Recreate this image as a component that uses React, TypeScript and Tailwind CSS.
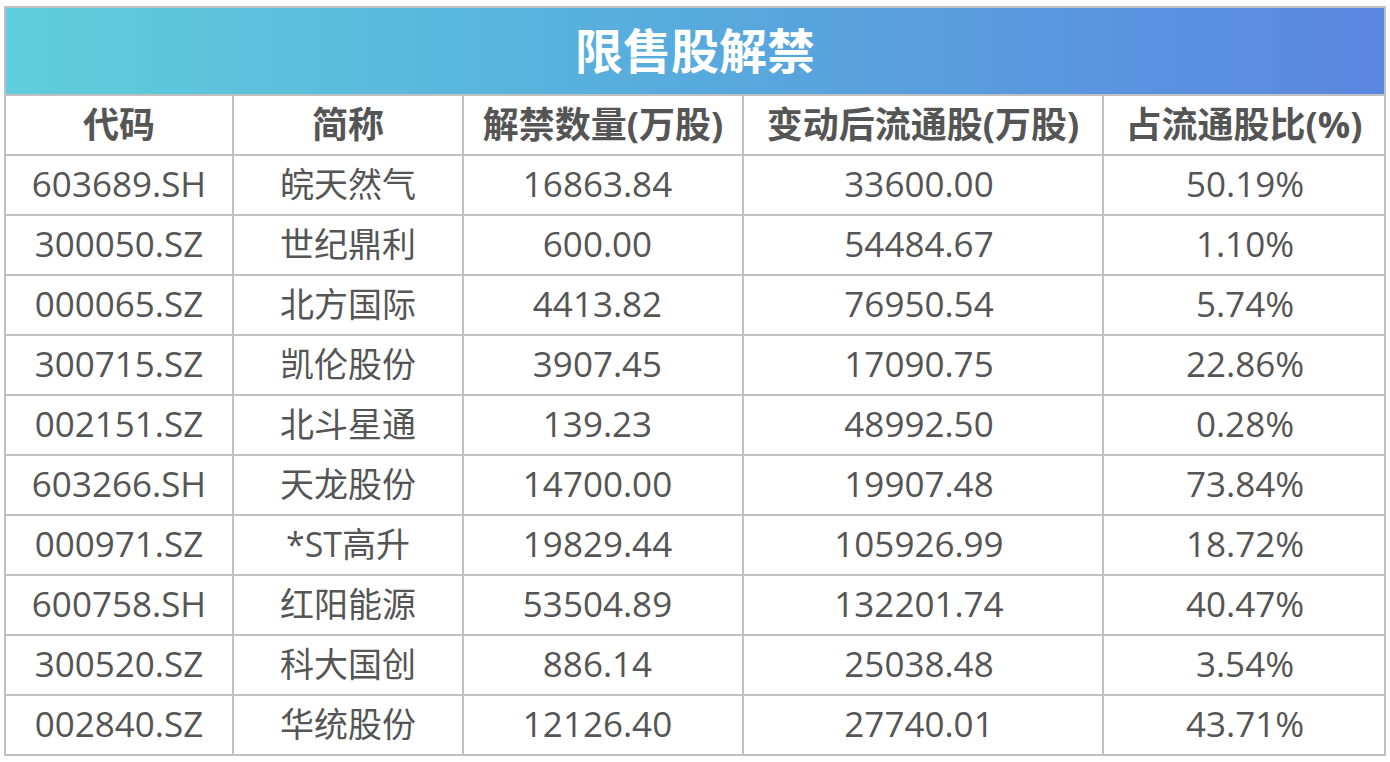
import React from 'react';

const rows = [
  ['603689.SH', '皖天然气', '16863.84', '33600.00', '50.19%'],
  ['300050.SZ', '世纪鼎利', '600.00', '54484.67', '1.10%'],
  ['000065.SZ', '北方国际', '4413.82', '76950.54', '5.74%'],
  ['300715.SZ', '凯伦股份', '3907.45', '17090.75', '22.86%'],
  ['002151.SZ', '北斗星通', '139.23', '48992.50', '0.28%'],
  ['603266.SH', '天龙股份', '14700.00', '19907.48', '73.84%'],
  ['000971.SZ', '*ST高升', '19829.44', '105926.99', '18.72%'],
  ['600758.SH', '红阳能源', '53504.89', '132201.74', '40.47%'],
  ['300520.SZ', '科大国创', '886.14', '25038.48', '3.54%'],
  ['002840.SZ', '华统股份', '12126.40', '27740.01', '43.71%'],
];

const headers = ['代码', '简称', '解禁数量(万股)', '变动后流通股(万股)', '占流通股比(%)'];

// per-column size / offset tweaks
const colCls = [
  'text-[35px]',
  'text-[34px]',
  'text-[35px] pr-[11px]',
  'text-[35px] pr-[8px]',
  'text-[35px] pl-[2px]',
];

const font = { fontFamily: '"Open Sans", "Noto Sans CJK SC", sans-serif' };

export default function App() {
  return (
    <div className="w-[1390px] h-[762px] bg-white pt-[6px] pl-[4px]" style={font}>
      <div className="w-[1382px] border-2 border-[#c0c0c0] bg-[#c0c0c0]">
        {/* 标题 */}
        <div className="h-[86px] bg-gradient-to-r from-[#5fcedb] via-[#57aadd] to-[#5b86e0] flex items-center justify-center">
          <span className="text-white text-[48px] font-bold leading-none">限售股解禁</span>
        </div>
        <div className="mt-[2px] grid grid-cols-[226px_228px_278px_358px_280px] gap-[2px]">
          {headers.map((h) => (
            <div key={h} className="h-[58px] bg-white flex items-center justify-center text-[36px] font-bold text-[#555555] leading-none">
              {h}
            </div>
          ))}
          {rows.map((r) =>
            r.map((c, i) => (
              <div
                key={r[0] + i}
                className={'h-[58px] pb-[3px] bg-white flex items-center justify-center text-[#555555] leading-none ' + colCls[i]}
              >
                {c}
              </div>
            ))
          )}
        </div>
      </div>
    </div>
  );
}
